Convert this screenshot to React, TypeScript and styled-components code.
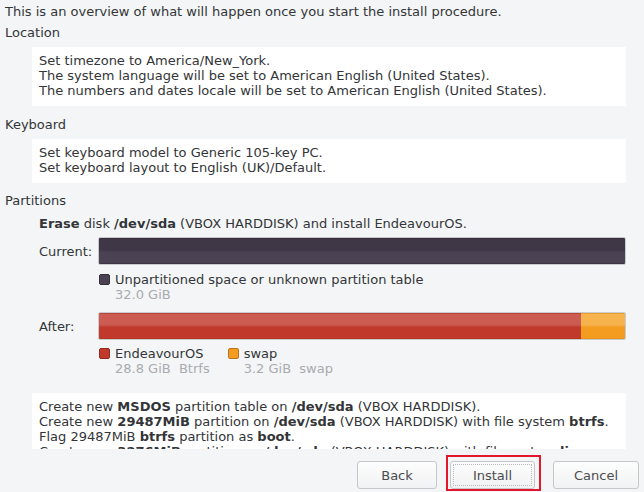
import React from "react";
import styled, { createGlobalStyle } from "styled-components";

const Global = createGlobalStyle`
  html, body { margin: 0; padding: 0; background: #f4f5f7; }
  body { font-family: "DejaVu Sans", "Liberation Sans", sans-serif; font-size: 13px; color: #333538; }
  * { box-sizing: border-box; }
`;

const Page = styled.div`
  width: 644px;
  height: 492px;
  overflow: hidden;
  background: #f4f5f7;
  display: flex;
  flex-direction: column;
  padding: 4px 5px 1px 5px;
  line-height: 15px;
`;

const Intro = styled.div`
  white-space: nowrap;
`;

const SectionTitle = styled.div<{ $top: number }>`
  margin-top: ${(p) => p.$top}px;
`;

const InfoBox = styled.div<{ $top: number }>`
  margin: ${(p) => p.$top}px 13px 0 27px;
  background: #ffffff;
  padding: 6px 7px 8px 7px;
  white-space: nowrap;
`;

const Line = styled.div``;

const PartitionArea = styled.div`
  margin: 8px 13px 0 34px;
  display: flex;
  flex-direction: column;
`;

const BarRow = styled.div<{ $top: number }>`
  display: flex;
  align-items: center;
  margin-top: ${(p) => p.$top}px;
`;

const BarLabel = styled.div`
  width: 59px;
  flex: none;
`;

const Bar = styled.div`
  flex: 1;
  height: 28px;
  display: flex;
  border: 1px solid #c9cacd;
  border-radius: 2px;
  overflow: hidden;
`;

const Segment = styled.div<{ $top: string; $mid: string; $edge: string }>`
  height: 100%;
  background: linear-gradient(
    to bottom,
    ${(p) => p.$edge} 0,
    ${(p) => p.$top} 1px,
    ${(p) => p.$top} 45%,
    ${(p) => p.$mid} 55%,
    ${(p) => p.$mid} calc(100% - 1px),
    ${(p) => p.$edge} 100%
  );
`;

const Legend = styled.div<{ $top: number }>`
  display: flex;
  margin: ${(p) => p.$top}px 0 0 60px;
  gap: 18px;
`;

const LegendItem = styled.div`
  display: grid;
  grid-template-columns: 11px auto;
  column-gap: 5px;
  align-items: center;
`;

const Swatch = styled.div<{ $color: string; $border: string }>`
  width: 11px;
  height: 11px;
  border-radius: 2px;
  background: ${(p) => p.$color};
  border: 1px solid ${(p) => p.$border};
`;

const Sub = styled.div`
  grid-column: 2;
  color: #a9abae;
  white-space: pre;
`;

const LogBox = styled.div`
  margin: 17px 13px 0 27px;
  height: 56px;
  flex: none;
  overflow: hidden;
  background: #ffffff;
  padding: 6px 7px 0 7px;
  white-space: nowrap;
`;

const ButtonBar = styled.div`
  display: flex;
  justify-content: flex-end;
  align-items: flex-end;
  margin-top: auto;
`;

const Button = styled.button<{ $w: number; $focus?: boolean }>`
  position: relative;
  width: ${(p) => p.$w}px;
  height: 28px;
  border: 1px solid #c6c7ca;
  border-radius: 3px;
  background: linear-gradient(to bottom, #fdfdfd, #f1f2f3);
  font-family: "DejaVu Sans", "Liberation Sans", sans-serif;
  font-size: 13px;
  color: #4a4c4f;
  padding: 0;
  &::after {
    content: "";
    display: ${(p) => (p.$focus ? "block" : "none")};
    position: absolute;
    inset: 2px;
    border: 1px dotted #b8b9bc;
    border-radius: 1px;
  }
`;

const SideButton = styled(Button)`
  margin-bottom: 2px;
`;

const Highlight = styled.div`
  border: 2px solid #e3162c;
  padding: 4px 4px 0 2px;
  margin: 0 12px 0 9px;
  display: flex;
`;

export default function App() {
  return (
    <>
      <Global />
      <Page>
        <Intro>This is an overview of what will happen once you start the install procedure.</Intro>
        <SectionTitle $top={6}>Location</SectionTitle>
        <InfoBox $top={7}>
          <Line>Set timezone to America/New_York.</Line>
          <Line>The system language will be set to American English (United States).</Line>
          <Line>The numbers and dates locale will be set to American English (United States).</Line>
        </InfoBox>
        <SectionTitle $top={11}>Keyboard</SectionTitle>
        <InfoBox $top={7}>
          <Line>Set keyboard model to Generic 105-key PC.</Line>
          <Line>Set keyboard layout to English (UK)/Default.</Line>
        </InfoBox>
        <SectionTitle $top={10}>Partitions</SectionTitle>
        <PartitionArea>
          <Line>
            <b>Erase</b> disk <b>/dev/sda</b> (VBOX HARDDISK) and install EndeavourOS.
          </Line>
          <BarRow $top={6}>
            <BarLabel>Current:</BarLabel>
            <Bar>
              <Segment style={{ width: "100%" }} $top="#3f3646" $mid="#4b4254" $edge="#2e2733" />
            </Bar>
          </BarRow>
          <Legend $top={7}>
            <LegendItem>
              <Swatch $color="#4a4152" $border="#352e3b" />
              <div>Unpartitioned space or unknown partition table</div>
              <Sub>32.0 GiB</Sub>
            </LegendItem>
          </Legend>
          <BarRow $top={10}>
            <BarLabel>After:</BarLabel>
            <Bar>
              <Segment style={{ width: "91.7%" }} $top="#cc5b52" $mid="#c0392b" $edge="#a8301f" />
              <Segment style={{ width: "8.3%" }} $top="#f6b24d" $mid="#f39c1f" $edge="#d98a18" />
            </Bar>
          </BarRow>
          <Legend $top={6}>
            <LegendItem>
              <Swatch $color="#c0392b" $border="#8e2a20" />
              <div>EndeavourOS</div>
              <Sub>{"28.8 GiB  Btrfs"}</Sub>
            </LegendItem>
            <LegendItem>
              <Swatch $color="#f39c1f" $border="#b7741a" />
              <div>swap</div>
              <Sub>{"3.2 GiB  swap"}</Sub>
            </LegendItem>
          </Legend>
        </PartitionArea>
        <LogBox>
          <Line>
            Create new <b>MSDOS</b> partition table on <b>/dev/sda</b> (VBOX HARDDISK).
          </Line>
          <Line>
            Create new <b>29487MiB</b> partition on <b>/dev/sda</b> (VBOX HARDDISK) with file system <b>btrfs</b>.
          </Line>
          <Line>
            Flag 29487MiB <b>btrfs</b> partition as <b>boot</b>.
          </Line>
          <Line>
            Create new <b>3276MiB</b> partition on <b>/dev/sda</b> (VBOX HARDDISK) with file system <b>linuxswap</b>.
          </Line>
        </LogBox>
        <ButtonBar>
          <SideButton $w={80}>Back</SideButton>
          <Highlight>
            <Button $w={85} $focus>Install</Button>
          </Highlight>
          <SideButton $w={86}>Cancel</SideButton>
        </ButtonBar>
      </Page>
    </>
  );
}
